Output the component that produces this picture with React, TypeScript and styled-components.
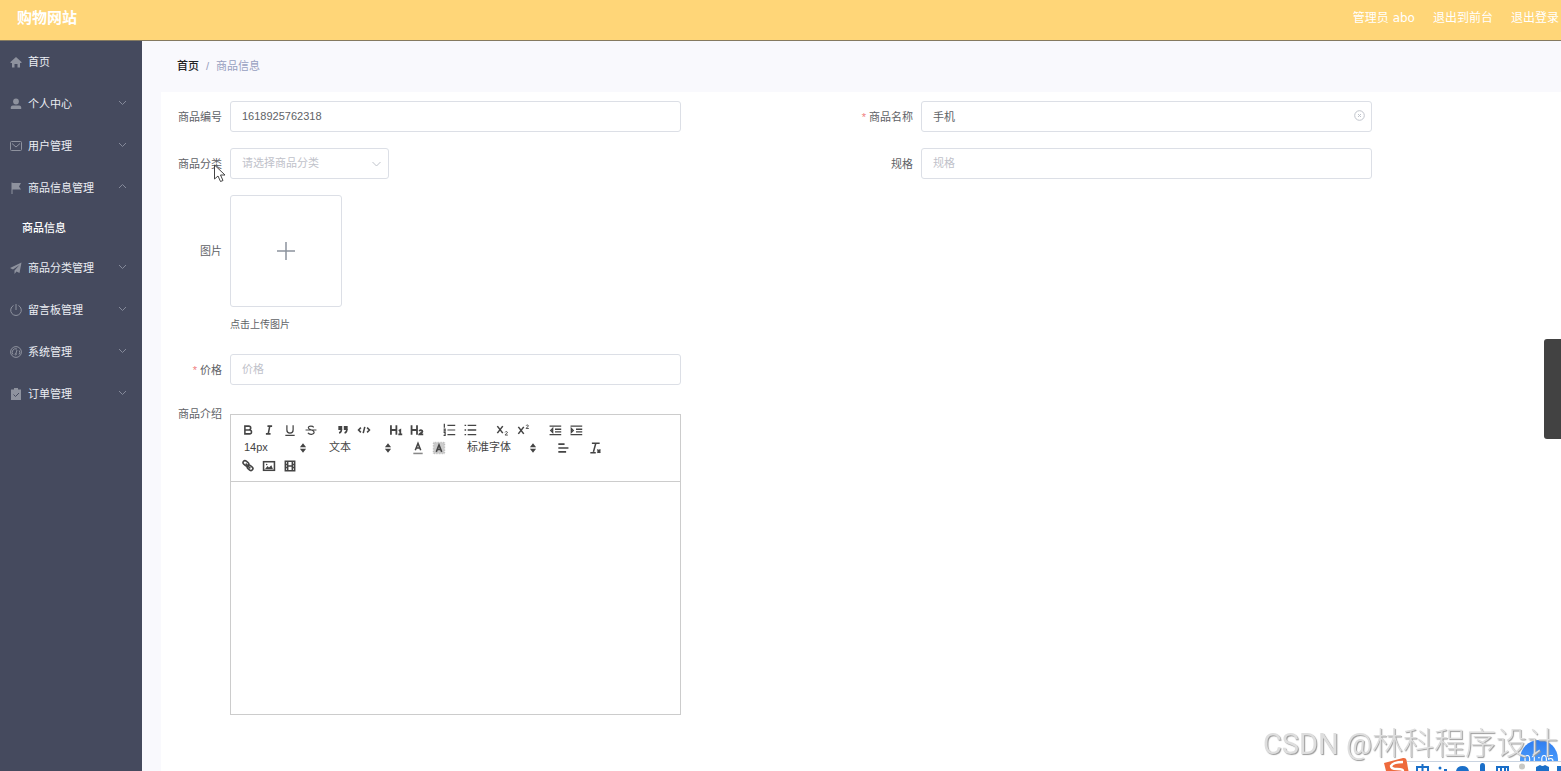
import React from "react";
import styled, { createGlobalStyle } from "styled-components";

const sans = `"Liberation Sans", "Noto Sans CJK SC", sans-serif`;

const GlobalStyle = createGlobalStyle`
  *, *::before, *::after { box-sizing: border-box; }
  html, body { margin: 0; padding: 0; }
  body { background: #fff; color: #606266; font: 11px/16px ${sans}; overflow-x: hidden; }
  button, input, select, textarea { font: inherit; color: inherit; margin: 0; }
  button { border: 0; padding: 0; background: none; cursor: pointer; }
  a { color: inherit; text-decoration: none; }
  svg { display: block; }
`;

const Page = styled.div`
  min-height: 100vh;
  display: flex;
  flex-direction: column;
`;

const Header = styled.header`
  height: 41px;
  padding: 0 2px 4px 17px;
  display: flex;
  align-items: center;
  justify-content: space-between;
  background: #ffd678;
  border-bottom: 1px solid #857a60;
  color: #fff;
`;

const SiteTitle = styled.h1`
  margin: 0;
  font-size: 15px;
  line-height: 20px;
  font-weight: 700;
`;

const HeaderLinks = styled.nav`
  display: flex;
  gap: 18px;
  font: 12px/16px "DejaVu Sans", "Noto Sans CJK SC", sans-serif;
  white-space: nowrap;
`;

const Body = styled.div`
  flex: 1;
  display: flex;
`;

const Sidebar = styled.nav`
  width: 142px;
  flex: none;
  background: #454a5e;
  color: #eceef4;
`;

const MenuItem = styled.button`
  width: 100%;
  height: 42px;
  padding: 0 15px 0 10px;
  display: grid;
  grid-template-columns: 12px 1fr 9px;
  column-gap: 6px;
  align-items: center;
  text-align: left;
  white-space: nowrap;
`;

const MenuIcon = styled.svg`
  width: 12px;
  height: 12px;
  fill: none;
  stroke: #8e929e;
  color: #8e929e;
`;

const Chevron = styled.svg<{ $up?: boolean }>`
  width: 9px;
  height: 9px;
  fill: none;
  stroke: #858a9a;
  margin-bottom: 3px;
  transform: ${(p) => (p.$up ? "rotate(180deg)" : "none")};
`;

const SubItem = styled.a`
  display: block;
  padding-left: 22px;
  line-height: 38px;
  font-weight: 500;
  color: #fff;
`;

const Main = styled.main`
  flex: 1;
  min-width: 0;
  padding-left: 19px;
  display: flex;
  flex-direction: column;
  background: #f9f9fd;
`;

const Breadcrumb = styled.nav`
  height: 51px;
  padding: 0 0 2px 16px;
  display: flex;
  align-items: center;
  gap: 7px;
  color: #97a0c0;

  a { color: #222; font-weight: 500; }
`;

const Form = styled.form`
  flex: 1;
  padding: 9px 9px 56px;
  display: grid;
  grid-template-columns: 1fr 1fr;
  align-content: start;
  row-gap: 16px;
  background: #fff;
`;

const Field = styled.div<{ $wide?: boolean; $top?: boolean }>`
  grid-column: ${(p) => (p.$wide ? "1 / -1" : "auto")};
  width: ${(p) => (p.$wide ? "50%" : "auto")};
  display: grid;
  grid-template-columns: 52px minmax(0, 451px);
  column-gap: 8px;
  align-items: ${(p) => (p.$top ? "start" : "center")};
`;

const Label = styled.label<{ $required?: boolean }>`
  line-height: 26px;
  display: flex;
  justify-content: flex-end;
  white-space: nowrap;

  &::before {
    content: "${(p) => (p.$required ? "*" : "")}";
    margin-right: 3px;
    color: #f08080;
  }
`;

const InputWrap = styled.div<{ $narrow?: boolean }>`
  position: relative;
  width: ${(p) => (p.$narrow ? "159px" : "100%")};
`;

const control = `
  display: block;
  width: 100%;
  height: 31px;
  padding: 0 11px 2px;
  border: 1px solid #dcdfe6;
  border-radius: 3px;
  background: #fff;
  outline: none;
`;

const Input = styled.input`
  ${control}
  &::placeholder { color: #bfc2ca; opacity: 1; }
`;

const Select = styled.select`
  ${control}
  appearance: none;
  color: #bfc2ca;
`;

const Suffix = styled.svg`
  position: absolute;
  right: 7px;
  top: 9px;
  width: 11px;
  height: 11px;
  fill: none;
  stroke: #c0c4cc;
  pointer-events: none;
`;

const UploadBox = styled.button`
  width: 112px;
  height: 112px;
  display: grid;
  place-items: center;
  border: 1px solid #dcdfe6;
  border-radius: 3px;
`;

const UploadTip = styled.p`
  margin: 0;
  height: 31px;
  padding: 5px 0 0 60px;
  font-size: 10px;
  line-height: 26px;
`;

const UploadField = styled.div`
  grid-column: 1 / -1;
`;

const Editor = styled.div`
  margin-top: 13px;
  border: 1px solid #ccc;
`;

const Toolbar = styled.div`
  padding: 6px;
  border-bottom: 1px solid #ccc;
`;

const ToolRow = styled.div`
  height: 18px;
  display: flex;
  gap: 11px;
`;

const ToolGroup = styled.div`
  display: flex;
`;

const ToolButton = styled.button`
  width: 21px;
  height: 18px;
  display: grid;
  place-items: center;
`;

const ToolIcon = styled.svg`
  width: 14px;
  height: 14px;
  fill: none;
  stroke: #444;
  stroke-width: 2;
`;

const Picker = styled.div<{ $wide?: boolean }>`
  position: relative;
  width: ${(p) => (p.$wide ? "81px" : "74px")};
`;

const PickerSelect = styled.select`
  width: 100%;
  height: 16px;
  padding: 0 0 0 7px;
  border: 0;
  background: none;
  appearance: none;
  color: #444;
  line-height: 16px;
  outline: none;
`;

const PickerArrows = styled.svg`
  position: absolute;
  right: 1px;
  top: 2px;
  width: 14px;
  height: 14px;
  fill: #444;
  pointer-events: none;
`;

const EditorArea = styled.textarea`
  display: block;
  width: 100%;
  height: 232px;
  padding: 9px 11px;
  border: 0;
  outline: none;
  resize: none;
`;

const SideTab = styled.div`
  position: fixed;
  right: 0;
  top: 339px;
  width: 17px;
  height: 100px;
  border-radius: 3px 0 0 3px;
  background: #424242;
`;

const Pointer = styled.svg`
  position: absolute;
  left: 213px;
  top: 164px;
  width: 14px;
  height: 19px;
`;

const Recorder = styled.div`
  position: fixed;
  right: 3px;
  bottom: 0;
  width: 38px;
  height: 31px;
  padding-top: 12px;
  border-radius: 19px 19px 0 0;
  background: linear-gradient(#2e7cf0, #56a8ff);
  color: #fff;
  font: 12px/16px "Liberation Sans", sans-serif;
  text-align: center;
`;

const ImeBar = styled.svg`
  position: fixed;
  right: 0;
  bottom: 0;
  width: 178px;
  height: 14px;
`;

const Watermark = styled.div`
  position: fixed;
  right: 3px;
  bottom: 5px;
  display: flex;
  align-items: baseline;
  font: 300 31px/44px "Noto Sans CJK SC", sans-serif;
  color: #dedede;
  text-shadow: 1px 1px 1px #999;
  white-space: nowrap;
  pointer-events: none;

  span { font-family: Roboto, sans-serif; font-size: 29px; font-weight: 400; }
`;

const menuIcons: Record<string, React.ReactNode> = {
  home: <path d="M6 1 .5 6v1H2v4.500h2.500V8h3v3.500H10V7h1.500V6Z" fill="currentColor" stroke="none" />,
  user: (
    <g fill="currentColor" stroke="none">
      <circle cx="6" cy="3.500" r="2.900" />
      <path d="M.8 11V9.500q0-2 2-2h6.400q2 0 2 2V11Z" />
    </g>
  ),
  mail: (
    <g>
      <rect x=".5" y="1.500" width="11" height="9" rx="1" />
      <path d="m2 3.500 4 3.500 4-3.500" />
    </g>
  ),
  flag: <path d="M1.500 0.500v11.500h1V7.500H11L9 4.500l2-3.500H2.500V.5Z" fill="currentColor" stroke="none" />,
  send: <path d="M11.500.5 0 6l3 1.500L9.500 3 4.500 8.500V12l2-2.500L9.500 11Z" fill="currentColor" stroke="none" />,
  power: <path d="M3.500 1.500a5.300 5.300 0 1 0 5 0M6 0v6" />,
  gauge: (
    <g>
      <circle cx="6" cy="6" r="5.400" />
      <path d="M3 8.500a3.500 3.500 0 0 1 4-5.500M9 8.500a3.500 3.500 0 0 0 .2-4M5.800 8 7 4" />
      <circle cx="5.700" cy="8.300" r=".7" />
    </g>
  ),
  order: (
    <g>
      <path d="M1 1.500h3V0h4v1.500h3V12H1Z" fill="currentColor" stroke="none" />
      <path d="m3.500 6.500 2 2 3.500-3.500" stroke="#454a5e" />
    </g>
  ),
};

interface Entry {
  icon: string;
  text: string;
  child?: string;
}

const menu: Entry[] = [
  { icon: "home", text: "首页" },
  { icon: "user", text: "个人中心" },
  { icon: "mail", text: "用户管理" },
  { icon: "flag", text: "商品信息管理", child: "商品信息" },
  { icon: "send", text: "商品分类管理" },
  { icon: "power", text: "留言板管理" },
  { icon: "gauge", text: "系统管理" },
  { icon: "order", text: "订单管理" },
];

/* Editor glyphs on an 18-unit grid */
const tools: Record<string, React.ReactNode> = {
  粗体: <path d="M5 4h5a2.500 2.500 0 0 1 0 5H5Zm0 5h6a2.500 2.500 0 0 1 0 5H5Z" />,
  斜体: <path d="M7 4h6M5 14h6M8 14l2-10" />,
  下划线: <path d="M5 3v6a4 4 0 0 0 8 0V3M3 16h12" strokeWidth="1.600" />,
  删除线: (
    <path d="M2 9h14M12.500 5.500C11 3.500 6 3.500 5.500 6c-.3 3 7.500 2.500 7.500 6 0 3-6 3.500-8 .8" strokeWidth="1.500" />
  ),
  引用: (
    <g fill="#444">
      <path d="M4 5h3v3H4ZM11 5h3v3h-3Z" />
      <path d="M7 8q0 4-3 5M14 8q0 4-3 5" fill="none" />
    </g>
  ),
  代码: <path d="M5 6 2 9l3 3M13 6l3 3-3 3M10 5 8 13" />,
  一级标题: <path d="M2.500 3v12M9.500 3v12M3 9h7M12.500 10l2-1V15M12 14.500h5" strokeWidth="2.300" />,
  二级标题: (
    <path d="M2 3v12M9 3v12M2 9h7M12 10.500c.5-2 4-1.500 4 .3 0 1.500-3.500 2.200-4 3.700H17" strokeWidth="2.300" />
  ),
  有序列表: <path d="M7 3h10M7 9h10M7 15h10M3 1v5M2 8h2v2H2M2 12h2v4H2" strokeWidth="1.600" />,
  无序列表: <path d="M6 3h11M6 9h11M6 15h11M2 3h2M2 9h2M2 15h2" strokeWidth="1.700" />,
  下标: (
    <g>
      <path d="m3 4 7 9M10 4l-7 9" />
      <path d="M13 12c.5-1.500 3-1 3 .2 0 1.300-3 2-3 3.300h3.500" strokeWidth="1.200" />
    </g>
  ),
  上标: (
    <g>
      <path d="m3 5 7 9M10 5l-7 9" />
      <path d="M13 3.500c.5-1.500 3-1 3 .2C16 5 13 5.700 13 7h3.500" strokeWidth="1.200" />
    </g>
  ),
  减少缩进: <path d="M2 4h15M2 15h15M9 8h8M9 11.500h8M6 7 3.500 9.500 6 12Z" strokeWidth="1.700" />,
  增加缩进: <path d="M2 4h15M2 15h15M9 8h8M9 11.500h8M3 7l2.500 2.500L3 12Z" strokeWidth="1.700" />,
  文字颜色: (
    <g>
      <path d="M5.500 12 9 3l3.500 9M6.500 9h5" />
      <path d="M3 16h12" stroke="#888" />
    </g>
  ),
  背景颜色: (
    <g>
      <path d="M2 2h14v14H2Z" fill="#ccc" stroke="#bbb" strokeDasharray="1 1" />
      <path d="M5.500 14 9 5l3.500 9M6.500 11h5" />
    </g>
  ),
  对齐: <path d="M3 4h8M3 9h13M3 14h10" />,
  清除格式: <path d="M5 3h10M10 3 7 14M3 15h7M12 11l4 4M16 11l-4 4" />,
  链接: (
    <g>
      <rect x="2" y="3" width="8" height="5" rx="2.500" transform="rotate(40 6 6)" />
      <rect x="8" y="9" width="8" height="5" rx="2.500" transform="rotate(40 12 11)" />
      <path d="m6 6 6 6" />
    </g>
  ),
  插入图片: (
    <g>
      <rect x="2" y="3.500" width="14" height="11" />
      <path d="m4 13 3-4 2 2 3-3 2 5Z" fill="#444" stroke="none" />
      <circle cx="6" cy="7" r="1" fill="#444" stroke="none" />
    </g>
  ),
  插入视频: <path d="M3 3h12v12H3ZM6 3v12M12 3v12M6 9h6M3 7h3M3 11h3M12 7h3M12 11h3" />,
};

const Tools = ({ names }: { names: string[] }) => (
  <ToolGroup>
    {names.map((name) => (
      <ToolButton key={name} type="button" aria-label={name}>
        <ToolIcon viewBox="0 0 18 18">{tools[name]}</ToolIcon>
      </ToolButton>
    ))}
  </ToolGroup>
);

const ToolPicker = ({ label, value, wide }: { label: string; value: string; wide?: boolean }) => (
  <Picker $wide={wide}>
    <PickerSelect aria-label={label}>
      <option>{value}</option>
    </PickerSelect>
    <PickerArrows viewBox="0 0 18 18">
      <path d="m9 3 4 5H5ZM9 15l4-5H5Z" />
    </PickerArrows>
  </Picker>
);

export default function App() {
  return (
    <Page>
      <GlobalStyle />
      <Header>
        <SiteTitle>购物网站</SiteTitle>
        <HeaderLinks>
          <span>管理员 abo</span>
          <a href="#front">退出到前台</a>
          <a href="#logout">退出登录</a>
        </HeaderLinks>
      </Header>
      <Body>
        <Sidebar>
          {menu.map((entry) => (
            <React.Fragment key={entry.text}>
              <MenuItem type="button">
                <MenuIcon viewBox="0 0 12 12">{menuIcons[entry.icon]}</MenuIcon>
                <span>{entry.text}</span>
                {entry.icon !== "home" && (
                  <Chevron viewBox="0 0 9 9" $up={!!entry.child}>
                    <path d="m1 3 3.500 3.500L8 3" />
                  </Chevron>
                )}
              </MenuItem>
              {entry.child && <SubItem href="#goods">{entry.child}</SubItem>}
            </React.Fragment>
          ))}
        </Sidebar>
        <Main>
          <Breadcrumb>
            <a href="#home">首页</a>
            <span>/</span>
            <span>商品信息</span>
          </Breadcrumb>
          <Form>
            <Field>
              <Label htmlFor="code">商品编号</Label>
              <Input id="code" defaultValue="1618925762318" />
            </Field>
            <Field>
              <Label htmlFor="name" $required>商品名称</Label>
              <InputWrap>
                <Input id="name" defaultValue="手机" />
                <Suffix viewBox="0 0 11 11">
                  <circle cx="5.500" cy="5.500" r="4.800" />
                  <path d="m4 4 3 3M7 4 4 7" />
                </Suffix>
              </InputWrap>
            </Field>
            <Field>
              <Label htmlFor="category">商品分类</Label>
              <InputWrap $narrow>
                <Select id="category">
                  <option>请选择商品分类</option>
                </Select>
                <Suffix viewBox="0 0 11 11">
                  <path d="m1.500 5 4 4 4-4" />
                </Suffix>
              </InputWrap>
            </Field>
            <Field>
              <Label htmlFor="spec">规格</Label>
              <Input id="spec" placeholder="规格" />
            </Field>
            <UploadField>
              <Field>
                <Label htmlFor="picture">图片</Label>
                <UploadBox id="picture" type="button" aria-label="上传图片">
                  <svg width="18" height="18" viewBox="0 0 18 18" stroke="#8c939d" strokeWidth="1.500">
                    <path d="M9 0v18M0 9h18" />
                  </svg>
                </UploadBox>
              </Field>
              <UploadTip>点击上传图片</UploadTip>
            </UploadField>
            <Field $wide>
              <Label htmlFor="price" $required>价格</Label>
              <Input id="price" placeholder="价格" />
            </Field>
            <Field $wide $top>
              <Label htmlFor="intro">商品介绍</Label>
              <Editor>
                <Toolbar>
                  <ToolRow>
                    <Tools names={["粗体", "斜体", "下划线", "删除线"]} />
                    <Tools names={["引用", "代码"]} />
                    <Tools names={["一级标题", "二级标题"]} />
                    <Tools names={["有序列表", "无序列表"]} />
                    <Tools names={["下标", "上标"]} />
                    <Tools names={["减少缩进", "增加缩进"]} />
                  </ToolRow>
                  <ToolRow>
                    <ToolPicker label="字号" value="14px" />
                    <ToolPicker label="段落" value="文本" />
                    <Tools names={["文字颜色", "背景颜色"]} />
                    <ToolPicker label="字体" value="标准字体" wide />
                    <Tools names={["对齐"]} />
                    <Tools names={["清除格式"]} />
                  </ToolRow>
                  <ToolRow>
                    <Tools names={["链接", "插入图片", "插入视频"]} />
                  </ToolRow>
                </Toolbar>
                <EditorArea id="intro" />
              </Editor>
            </Field>
          </Form>
        </Main>
      </Body>
      <SideTab />
      <Recorder>01:05</Recorder>
      <ImeBar viewBox="0 0 178 14">
        <path d="M20 5h158v9H20Z" fill="#fff" />
        <path d="M24 4.500h154" stroke="#c9d3e0" />
        <path d="m1 6 19-5q3-.5 3.500 2l2 11H3Z" fill="#ee6a3c" />
        <path d="M20 5q-10 0-12 4 0 3 6 3 6 0 6 2" fill="none" stroke="#fff" strokeWidth="2.500" />
        <g fill="none" stroke="#1a6fc9" strokeWidth="2">
          <path d="M34 14v-4h11v4M39.500 7v7" />
          <path d="M114 14v-4h11v4M118 10v4M122 10v4" />
        </g>
        <g fill="#1a6fc9">
          <circle cx="57" cy="11" r="1.500" />
          <path d="M61 12h3v2h-3Z" />
          <path d="M73 14q1-5 6.500-5t6.500 5Z" />
          <path d="M97 14V9q0-3 2.500-3t2.500 3v5Z" />
          <path d="M153 10l4-2q2.500 2 5 0l4 2v4h-13Z" />
          <path d="M174 9h4v5h-4Z" />
        </g>
        <circle cx="139" cy="9.500" r="3" fill="#c8c8c4" />
      </ImeBar>
      <Watermark>
        <span>CSDN @</span>林科程序设计
      </Watermark>
      <Pointer viewBox="0 0 14 19">
        <path d="M1.500 1v14l3.500-3 2.500 5.500 2.500-1-2.500-5.500H12Z" fill="#fff" stroke="#444" />
      </Pointer>
    </Page>
  );
}
